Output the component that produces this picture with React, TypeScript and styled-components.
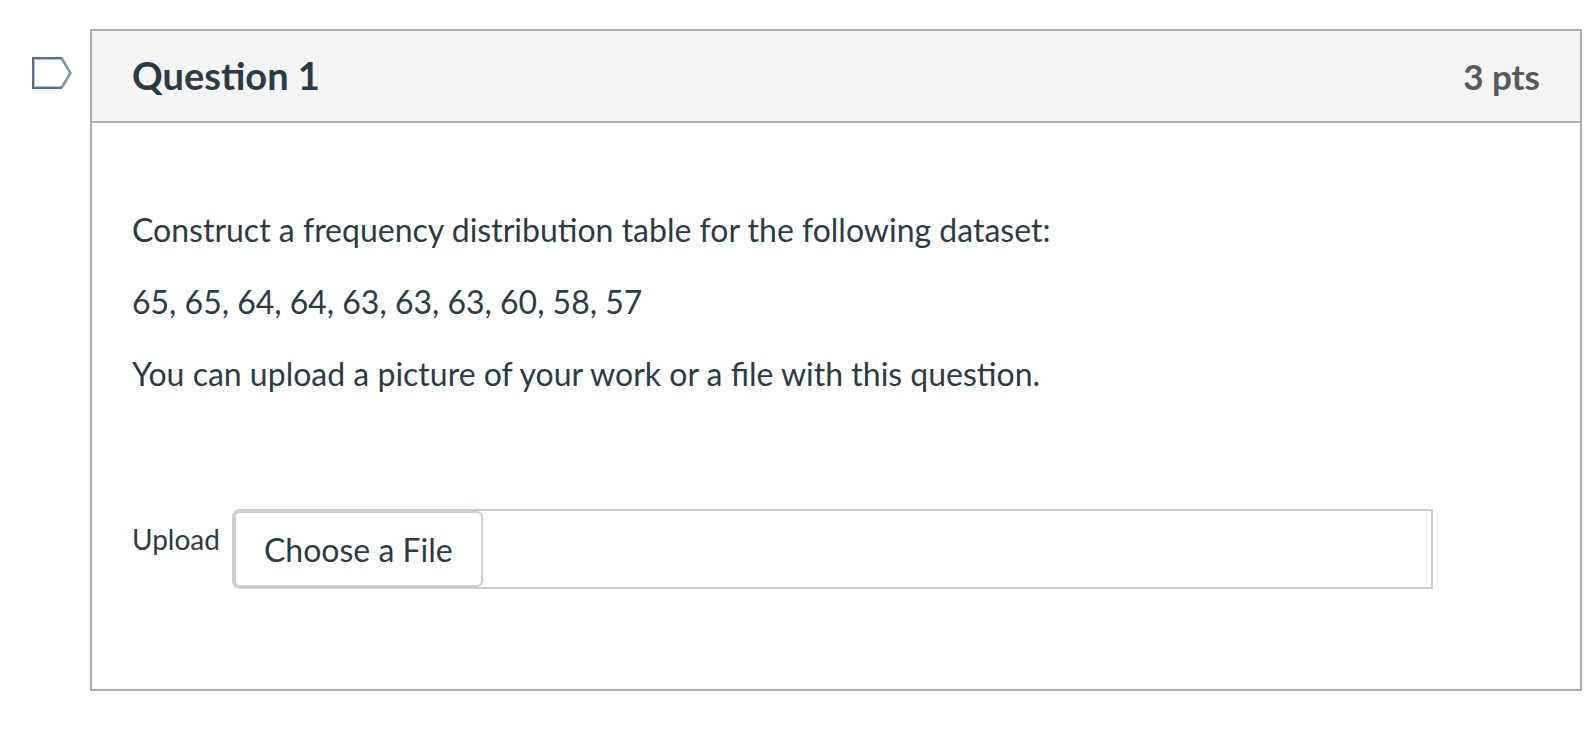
import React from "react";
import styled, { createGlobalStyle } from "styled-components";

const GlobalStyle = createGlobalStyle`
  * { box-sizing: border-box; }
  body {
    margin: 0;
    background: #ffffff;
    color: #2d3b45;
    font-family: Lato, "Helvetica Neue", sans-serif;
    -webkit-font-smoothing: antialiased;
  }
`;

const Page = styled.main`
  display: flex;
  align-items: flex-start;
  padding: 29px 4px 38px 32px;
`;

const FlagButton = styled.button`
  flex: none;
  width: 40px;
  height: 32px;
  margin: 28px 18px 0 0;
  padding: 0;
  border: 0;
  background: none;
  cursor: pointer;

  svg { display: block; }
`;

const Card = styled.section`
  flex: 1;
  min-width: 0;
  border: 2px solid #aaaaaa;
`;

const CardHeader = styled.header`
  display: flex;
  align-items: baseline;
  justify-content: space-between;
  padding: 20px 40px 22px;
  border-bottom: 2px solid #aaaaaa;
  background: #f5f5f5;
`;

const Title = styled.h1`
  margin: 0;
  font-size: 38px;
  line-height: 48px;
  font-weight: 700;
`;

const Points = styled.span`
  color: #595959;
  font-size: 35px;
  line-height: 40px;
  font-weight: 700;
`;

const CardBody = styled.div`
  padding: 83px 40px 100px;
`;

const Prompt = styled.p`
  margin: 0 0 24px;
  font-size: 32px;
  line-height: 48px;
`;

const UploadRow = styled.div`
  display: flex;
  align-items: flex-start;
  gap: 12px;
  margin-top: 111px;
`;

const UploadLabel = styled.label`
  padding-top: 10px;
  font-size: 28px;
  line-height: 40px;
`;

const FileField = styled.div`
  flex: 1;
  max-width: 1201px;
  display: flex;
  border: 2px solid #c7cdd1;
  border-radius: 8px 0 0 8px;
`;

const ChooseButton = styled.button`
  height: 76px;
  padding: 0 28px;
  border: 2px solid #c7cdd1;
  border-radius: 6px;
  background: #ffffff;
  color: #2d3b45;
  font: 32px Lato, sans-serif;
  cursor: pointer;
`;

export default function App() {
  return (
    <>
      <GlobalStyle />
      <Page>
        <FlagButton type="button" aria-label="Flag question">
          <svg width="40" height="32" viewBox="0 0 40 32" fill="none">
            <path d="M2.5 2.5H29.5L37.5 16L29.5 29.5H2.5Z" stroke="#b4c1cb" />
            <path d="M29.5 1L38.5 16L29.5 31" stroke="#8797a2" strokeWidth="2.6" />
            <path d="M30 1H1V31H30" stroke="#5a7185" strokeWidth="2" />
          </svg>
        </FlagButton>
        <Card>
          <CardHeader>
            <Title>Question 1</Title>
            <Points>3 pts</Points>
          </CardHeader>
          <CardBody>
            <Prompt>Construct a frequency distribution table for the following dataset:</Prompt>
            <Prompt>65, 65, 64, 64, 63, 63, 63, 60, 58, 57</Prompt>
            <Prompt>You can upload a picture of your work or a file with this question.</Prompt>
            <UploadRow>
              <UploadLabel htmlFor="choose-file">Upload</UploadLabel>
              <FileField>
                <ChooseButton id="choose-file" type="button">Choose a File</ChooseButton>
              </FileField>
            </UploadRow>
          </CardBody>
        </Card>
      </Page>
    </>
  );
}
